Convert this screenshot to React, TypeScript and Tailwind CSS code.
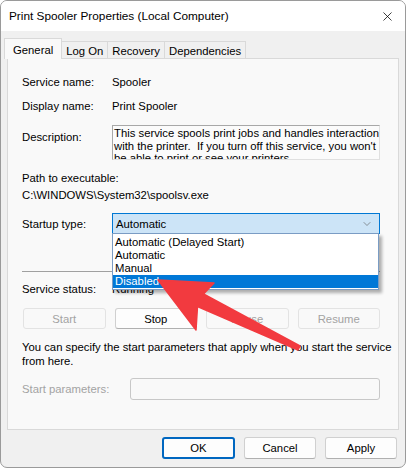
import { X, ChevronDown } from 'lucide-react';

function Tab({ label, active }: { label: string; active?: boolean }) {
    if (active) {
        return (
            <div className="relative z-10 -mb-px flex h-[21px] items-start border border-b-0 border-[#d9d9d9] bg-[#f9f9f9] px-[8px] pt-[3px]">
                {label}
            </div>
        );
    }
    return (
        <div className="flex h-[17px] items-center border border-b-0 border-l-0 border-[#d9d9d9] bg-[#f0f0f0] px-[4px] pt-[1px]">
            {label}
        </div>
    );
}

function Btn({ label, disabled }: { label: string; disabled?: boolean }) {
    return (
        <div
            className={
                disabled
                    ? 'flex h-[21px] items-center justify-center rounded-[3px] border border-[#e3e3e3] bg-[#f9f9f9] text-[#a3a3a3]'
                    : 'flex h-[21px] items-center justify-center rounded-[3px] border border-[#d0d0d0] border-b-[#b0b0b0] bg-[#fdfdfd]'
            }
        >
            {label}
        </div>
    );
}

export default function App() {
    return (
        <div className="relative flex h-[468px] w-[406px] flex-col overflow-hidden rounded-[7px] border border-[#9a9a9a] bg-[#f0f0f0] font-['Liberation_Sans',Arial,sans-serif] text-[11.3px] leading-[16px] text-black">
            {/* Title bar */}
            <div className="flex h-[30px] items-center justify-between bg-white pl-[8px] pr-[10px]">
                <span className="text-[11.8px]">Print Spooler Properties (Local Computer)</span>
                <X size={15} strokeWidth={1.2} />
            </div>

            {/* Tabs */}
            <div className="flex items-end pl-[3px] pt-[7px]">
                <Tab label="General" active />
                <Tab label="Log On" />
                <Tab label="Recovery" />
                <Tab label="Dependencies" />
            </div>

            {/* Tab panel */}
            <div className="mx-[6px] flex h-[372px] flex-col border border-[#d9d9d9] bg-[#f9f9f9] pl-[14px] pr-[18px] pt-[15px]">
                <div className="flex">
                    <span className="w-[90px]">Service name:</span>
                    <span>Spooler</span>
                </div>
                <div className="mt-[8px] flex">
                    <span className="w-[90px]">Display name:</span>
                    <span>Print Spooler</span>
                </div>
                <div className="mt-[11px] flex items-start">
                    <span className="mt-[4px] w-[90px]">Description:</span>
                    <div className="flex h-[35px] flex-1 overflow-hidden border border-[#a8a8a8] border-b-[#e0e0e0] border-r-[#e0e0e0] bg-[#fbfbfb]">
                        <div className="flex-1 whitespace-pre pl-[1px] pt-[1px] leading-[12.5px]">
                            <div>This service spools print jobs and handles interaction</div>
                            <div>with the printer.  If you turn off this service, you won't</div>
                            <div>be able to print or see your printers.</div>
                        </div>
                        <div className="w-[16px] bg-[#ececec]" />
                    </div>
                </div>
                <div className="mt-[10px]">Path to executable:</div>
                <div className="mt-[1px]">C:\WINDOWS\System32\spoolsv.exe</div>

                <div className="mt-[10px] flex items-center">
                    <span className="w-[90px]">Startup type:</span>
                    <div className="relative flex-1">
                        <div className="flex h-[21px] items-center justify-between border border-[#0078d4] bg-[#cce4f7] pl-[3px] pr-[6px]">
                            <span>Automatic</span>
                            <ChevronDown size={12} strokeWidth={1.2} className="text-[#555]" />
                        </div>
                        {/* Open dropdown list */}
                        <div className="absolute left-0 top-[20px] z-20 w-[267px] border border-[#7a9cc4] bg-white pb-[1px] pt-[2px] leading-[13px] shadow-[3px_3px_3px_rgba(0,0,0,0.3)]">
                            <div className="px-[2px]">Automatic (Delayed Start)</div>
                            <div className="px-[2px]">Automatic</div>
                            <div className="px-[2px]">Manual</div>
                            <div className="bg-[#0078d7] px-[2px] text-white">Disabled</div>
                        </div>
                    </div>
                </div>

                <div className="mt-[37px] h-px bg-[#a0a0a0]" />

                <div className="mt-[9px] flex">
                    <span className="w-[90px]">Service status:</span>
                    <span>Running</span>
                </div>

                <div className="ml-[1px] mt-[11px] grid grid-cols-4 gap-[9px]">
                    <Btn label="Start" disabled />
                    <Btn label="Stop" />
                    <Btn label="Pause" disabled />
                    <Btn label="Resume" disabled />
                </div>

                <div className="mt-[11px] whitespace-nowrap leading-[14px]">
                    You can specify the start parameters that apply when you start the service
                    <br />
                    from here.
                </div>

                <div className="mt-[10px] flex items-center">
                    <span className="w-[108px] text-[#a3a3a3]">Start parameters:</span>
                    <div className="h-[22px] flex-1 rounded-[3px] border border-[#c8c8c8] bg-[#f9f9f9]" />
                </div>
            </div>

            {/* Dialog buttons */}
            <div className="mt-[7px] flex justify-end gap-[9px] pr-[8px]">
                <div className="flex h-[22px] w-[73px] items-center justify-center rounded-[3px] border-2 border-[#0067c0] bg-[#fdfdfd]">
                    OK
                </div>
                <div className="flex h-[22px] w-[72px] items-center justify-center rounded-[3px] border border-[#d0d0d0] border-b-[#b0b0b0] bg-[#fdfdfd]">
                    Cancel
                </div>
                <div className="flex h-[22px] w-[72px] items-center justify-center rounded-[3px] border border-[#d0d0d0] border-b-[#b0b0b0] bg-[#fdfdfd]">
                    Apply
                </div>
            </div>

            {/* Red annotation arrow */}
            <svg className="pointer-events-none absolute left-[-1px] top-[-1px] z-30" width="406" height="468" viewBox="0 0 406 468">
                <polygon
                    points="158,280 214,283 203.5,294 300,346 298,350 197.5,306.5 196,330"
                    fill="#f23a3f"
                    stroke="#f23a3f"
                    strokeWidth="1.5"
                    strokeLinejoin="round"
                />
            </svg>
        </div>
    );
}
